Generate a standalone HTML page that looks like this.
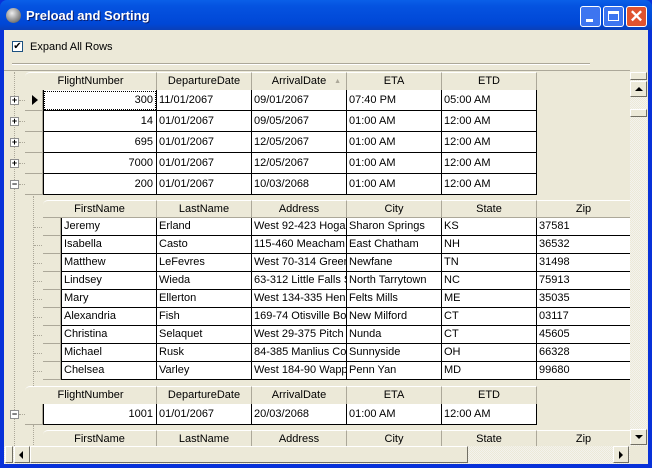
<!DOCTYPE html>
<html><head><style>
*{box-sizing:border-box;margin:0;padding:0}
body{width:652px;height:468px;overflow:hidden;font-family:"Liberation Sans",sans-serif;font-size:11px;background:#0831d9;position:relative}
.a{position:absolute}
.title{left:0;top:0;width:652px;height:30px;background:linear-gradient(#0a5fe8,#0553e0 20%,#0047d6 80%,#0a3fb8);border-radius:7px 7px 0 0}
.client{left:4px;top:30px;width:644px;height:434px;background:#ece9d8}
.hd{position:absolute;background:#ece9d8;border-right:1px solid #aca899;border-bottom:1px solid #aca899;border-top:1px solid #fff;text-align:center;line-height:17px;color:#000}
.c{position:absolute;background:#fff;border-right:1px solid #000;border-bottom:1px solid #000;white-space:nowrap;overflow:hidden;padding-left:2px}
.sel{position:absolute;background:#ece9d8;border-right:1px solid #aca899;border-bottom:1px solid #aca899}
.box{position:absolute;width:9px;height:9px;border:1px solid #8f8f8f;background:#fff;font-size:9px;line-height:7px;text-align:center;font-weight:bold}
.btn{position:absolute;background:#ece9d8;border:1px solid;border-color:#fff #716f64 #716f64 #fff}
</style></head><body>
<div class="a title"></div>
<div class="a" style="left:6px;top:8px;width:15px;height:15px;border-radius:50%;background:radial-gradient(circle at 40% 35%,#eee,#999 50%,#444)"></div>
<div class="a" style="left:26px;top:8px;color:#fff;font-weight:bold;font-size:13px;text-shadow:1px 1px #0a1e6e">Preload and Sorting</div>
<div class="a" style="left:580px;top:6px;width:21px;height:21px;border:1px solid #fff;border-radius:3px;background:#3d75f0"><div class="a" style="left:5px;top:12px;width:7px;height:3px;background:#fff"></div></div>
<div class="a" style="left:603px;top:6px;width:21px;height:21px;border:1px solid #fff;border-radius:3px;background:#3d75f0"><div class="a" style="left:4px;top:4px;width:11px;height:10px;border:1px solid #fff;border-top-width:3px"></div></div>
<div class="a" style="left:626px;top:6px;width:21px;height:21px;border:1px solid #fff;border-radius:3px;background:#e0532f;color:#fff;font-weight:bold;font-size:17px;line-height:19px;text-align:center">✕</div>
<div class="a client"></div>
<div class="a" style="left:12px;top:41px;width:11px;height:11px;border:1px solid #1c5180;background:#fff;font-size:10px;line-height:9px;text-align:center">✔</div>
<div class="a" style="left:30px;top:41px">Expand All Rows</div>
<div class="a" style="left:12px;top:63px;width:578px;height:2px;border-top:1px solid #aca899;border-bottom:1px solid #fff"></div>
<div class="a" style="left:4px;top:70px;width:626px;height:1px;background:#aca899"></div>
<div class="a" style="left:14px;top:72px;width:0;height:374px;border-left:1px dotted #aca899"></div>
<div class="a" style="left:33px;top:196px;width:0;height:190px;border-left:1px dotted #aca899"></div>
<div class="a" style="left:33px;top:425px;width:0;height:22px;border-left:1px dotted #aca899"></div>

<div class="hd" style="left:25px;top:72px;width:132px;height:19px;border-radius:5px 0 0 0">FlightNumber</div>
<div class="hd" style="left:157px;top:72px;width:95px;height:19px">DepartureDate</div>
<div class="hd" style="left:252px;top:72px;width:95px;height:19px">ArrivalDate<span style="position:absolute;right:5px;font-size:7px;color:#aca899">▲</span></div>
<div class="hd" style="left:347px;top:72px;width:95px;height:19px">ETA</div>
<div class="hd" style="left:442px;top:72px;width:95px;height:19px">ETD</div>

<div id="p"></div>
<script>
let h='';
const P=[['300','11/01/2067','09/01/2067','07:40 PM','05:00 AM','+'],['14','01/01/2067','09/05/2067','01:00 AM','12:00 AM','+'],['695','01/01/2067','12/05/2067','01:00 AM','12:00 AM','+'],['7000','01/01/2067','12/05/2067','01:00 AM','12:00 AM','+'],['200','01/01/2067','10/03/2068','01:00 AM','12:00 AM','−']];
function prow(r,y){
 h+=`<div class="sel" style="left:25px;top:${y}px;width:18px;height:21px"></div>`;
 h+=`<div class="box" style="left:10px;top:${y+6}px">${r[5]}</div><div class="a" style="left:19px;top:${y+10}px;width:6px;border-top:1px dotted #aca899"></div>`;
 const xs=[43,157,252,347,442],ws=[114,95,95,95,95];
 for(let i=0;i<5;i++)h+=`<div class="c" style="left:${xs[i]}px;top:${y}px;width:${ws[i]}px;height:21px;line-height:20px;${i==0?'text-align:right;padding-right:3px;border-left:1px solid #000':''}">${r[i]}</div>`;
}
P.forEach((r,i)=>prow(r,90+i*21));
h+=`<div class="a" style="left:32px;top:95px;width:0;height:0;border-left:6px solid #000;border-top:5px solid transparent;border-bottom:5px solid transparent"></div>`;
h+=`<div class="a" style="left:44px;top:91px;width:112px;height:19px;border:1px dotted #000"></div>`;
function chead(y){
 const n=['FirstName','LastName','Address','City','State','Zip'],xs=[43,157,252,347,442,537],ws=[114,95,95,95,95,94];
 for(let i=0;i<6;i++)h+=`<div class="hd" style="left:${xs[i]}px;top:${y}px;width:${ws[i]}px;height:18px;line-height:16px;${i==0?'border-radius:5px 0 0 0':''}">${n[i]}</div>`;
}
chead(200);
const C=[['Jeremy','Erland','West 92-423 Hoga','Sharon Springs','KS','37581'],['Isabella','Casto','115-460 Meacham','East Chatham','NH','36532'],['Matthew','LeFevres','West 70-314 Green','Newfane','TN','31498'],['Lindsey','Wieda','63-312 Little Falls S','North Tarrytown','NC','75913'],['Mary','Ellerton','West 134-335 Hen','Felts Mills','ME','35035'],['Alexandria','Fish','169-74 Otisville Bo','New Milford','CT','03117'],['Christina','Selaquet','West 29-375 Pitch','Nunda','CT','45605'],['Michael','Rusk','84-385 Manlius Co','Sunnyside','OH','66328'],['Chelsea','Varley','West 184-90 Wapp','Penn Yan','MD','99680']];
C.forEach((r,j)=>{const y=218+j*18;
 h+=`<div class="sel" style="left:43px;top:${y}px;width:18px;height:18px"></div><div class="a" style="left:34px;top:${y+9}px;width:8px;border-top:1px dotted #aca899"></div>`;
 const xs=[61,157,252,347,442,537],ws=[96,95,95,95,95,94];
 for(let i=0;i<6;i++)h+=`<div class="c" style="left:${xs[i]}px;top:${y}px;width:${ws[i]}px;height:18px;line-height:17px;${i==0?'border-left:1px solid #000':''}">${r[i]}</div>`;
});
document.getElementById('p').outerHTML=h;
</script>
<div class="hd" style="left:25px;top:386px;width:132px;height:19px;border-radius:5px 0 0 0">FlightNumber</div>
<div class="hd" style="left:157px;top:386px;width:95px;height:19px">DepartureDate</div>
<div class="hd" style="left:252px;top:386px;width:95px;height:19px">ArrivalDate</div>
<div class="hd" style="left:347px;top:386px;width:95px;height:19px">ETA</div>
<div class="hd" style="left:442px;top:386px;width:95px;height:19px">ETD</div>
<div class="sel" style="left:25px;top:404px;width:18px;height:21px"></div>
<div class="box" style="left:10px;top:410px">−</div><div class="a" style="left:19px;top:414px;width:6px;border-top:1px dotted #aca899"></div>
<div class="c" style="left:43px;top:404px;width:114px;height:21px;line-height:20px;text-align:right;padding-right:3px;border-left:1px solid #000">1001</div>
<div class="c" style="left:157px;top:404px;width:95px;height:21px;line-height:20px">01/01/2067</div>
<div class="c" style="left:252px;top:404px;width:95px;height:21px;line-height:20px">20/03/2068</div>
<div class="c" style="left:347px;top:404px;width:95px;height:21px;line-height:20px">01:00 AM</div>
<div class="c" style="left:442px;top:404px;width:95px;height:21px;line-height:20px">12:00 AM</div>
<div class="a" style="left:43px;top:430px;width:587px;height:16px;overflow:hidden"><div style="position:relative;left:-43px;top:-430px"><div class="hd" style="left:43px;top:430px;width:114px;height:18px;line-height:16px;border-radius:5px 0 0 0">FirstName</div><div class="hd" style="left:157px;top:430px;width:95px;height:18px;line-height:16px">LastName</div><div class="hd" style="left:252px;top:430px;width:95px;height:18px;line-height:16px">Address</div><div class="hd" style="left:347px;top:430px;width:95px;height:18px;line-height:16px">City</div><div class="hd" style="left:442px;top:430px;width:95px;height:18px;line-height:16px">State</div><div class="hd" style="left:537px;top:430px;width:94px;height:18px;line-height:16px">Zip</div></div></div>
<div class="a" style="left:630px;top:72px;width:17px;height:374px;background:repeating-conic-gradient(#f4f3ee 0 25%,#ece9d8 0 50%) 0 0/2px 2px"></div>
<div class="btn" style="left:630px;top:72px;width:17px;height:8px"></div>
<div class="btn" style="left:630px;top:81px;width:17px;height:16px"><div class="a" style="left:4px;top:5px;border-bottom:4px solid #000;border-left:4px solid transparent;border-right:4px solid transparent"></div></div>
<div class="btn" style="left:630px;top:109px;width:17px;height:8px"></div>
<div class="btn" style="left:630px;top:429px;width:17px;height:16px"><div class="a" style="left:4px;top:5px;border-top:4px solid #000;border-left:4px solid transparent;border-right:4px solid transparent"></div></div>
<div class="a" style="left:4px;top:446px;width:626px;height:18px;background:repeating-conic-gradient(#f4f3ee 0 25%,#ece9d8 0 50%) 0 0/2px 2px"></div>
<div class="btn" style="left:5px;top:446px;width:8px;height:17px"></div>
<div class="btn" style="left:14px;top:446px;width:16px;height:17px"><div class="a" style="left:4px;top:4px;border-right:4px solid #000;border-top:4px solid transparent;border-bottom:4px solid transparent"></div></div>
<div class="btn" style="left:30px;top:446px;width:438px;height:17px"></div>
<div class="btn" style="left:613px;top:446px;width:16px;height:17px"><div class="a" style="left:5px;top:4px;border-left:4px solid #000;border-top:4px solid transparent;border-bottom:4px solid transparent"></div></div>
</body></html>
